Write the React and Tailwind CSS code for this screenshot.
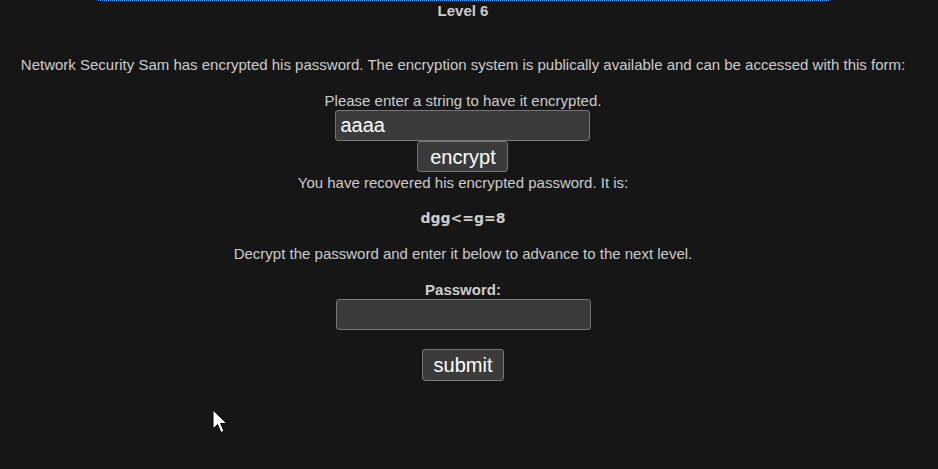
import React from 'react';

const body = { fontFamily: '"Liberation Sans", Arial, sans-serif' };

const Cursor = () => (
  <svg className="absolute left-[212px] top-[409px]" width="20" height="28" viewBox="0 0 20 28">
    <path d="M1 1 L1 20 L5.5 15.5 L9 23.5 L12 22.2 L8.6 14.5 L14.8 14.5 Z" fill="#ffffff" stroke="#000000" strokeWidth="1" strokeLinejoin="miter" />
  </svg>
);

export default function App() {
  return (
    <div className="relative min-h-[469px] w-full bg-[#161616] text-[#cccccc] overflow-hidden" style={body}>
      <div className="w-[926px] flex flex-col items-center">
        <div className="w-[731px] h-px border-t border-dotted border-[#3ea2ff]" />
        <h1 className="text-[15px] leading-[20px] font-bold">Level 6</h1>

        <p className="mt-[34px] text-[15px] leading-[20px] whitespace-nowrap">
          Network Security Sam has encrypted his password. The encryption system is publically available and can be accessed with this form:
        </p>

        <form className="flex flex-col items-center" onSubmit={(e) => e.preventDefault()}>
          <label className="mt-[17px] text-[15px] leading-[18px]">Please enter a string to have it encrypted.</label>
          <input
            defaultValue="aaaa"
            className="w-[255px] h-[31px] px-[4px] bg-[#3b3b3b] border border-[#767676] rounded-[3px] text-[20px] text-white outline-none"
            style={{ fontFamily: 'Arial, "Liberation Sans", sans-serif' }}
          />
          <button className="w-[91px] h-[31px] bg-[#3b3b3b] border border-[#767676] rounded-[3px] text-[20px] text-white leading-none">
            encrypt
          </button>
        </form>

        <p className="mt-px text-[15px] leading-[20px]">You have recovered his encrypted password. It is:</p>
        <p className="mt-[15px] text-[14px] leading-[20px] font-bold" style={{ fontFamily: '"DejaVu Sans", Verdana, sans-serif' }}>
          dgg&lt;=g=8
        </p>
        <p className="mt-[16px] text-[15px] leading-[20px]">Decrypt the password and enter it below to advance to the next level.</p>

        <form className="flex flex-col items-center" onSubmit={(e) => e.preventDefault()}>
          <label className="mt-[17px] text-[15px] leading-[18px] font-bold">Password:</label>
          <input
            type="password"
            className="w-[255px] h-[31px] px-[4px] bg-[#3b3b3b] border border-[#767676] rounded-[3px] text-[20px] text-white outline-none"
          />
          <button className="mt-[19px] w-[82px] h-[32px] bg-[#3b3b3b] border border-[#767676] rounded-[3px] text-[20px] text-white leading-none">
            submit
          </button>
        </form>
      </div>
      <Cursor />
    </div>
  );
}
